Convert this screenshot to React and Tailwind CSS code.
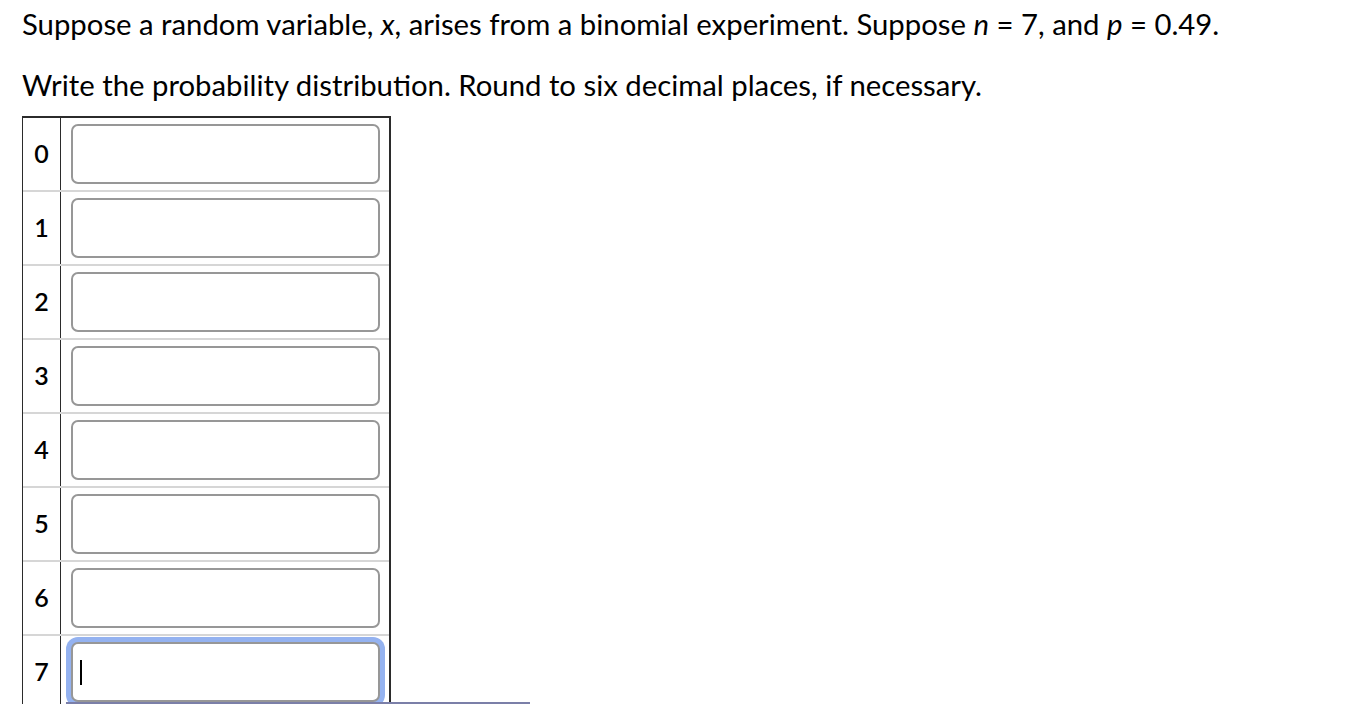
const values = [0, 1, 2, 3, 4, 5, 6, 7];

export default function App() {
  return (
    <div className="min-h-screen bg-white text-black pl-[22px] font-['Lato',sans-serif]">
      <p className="pt-[4px] text-[29.3px] leading-[40px]">
        Suppose a random variable, <i>x</i>, arises from a binomial experiment.
        Suppose <i>n</i> = 7, and <i>p</i> = 0.49.
      </p>
      <p className="mt-[21px] text-[29.3px] leading-[40px]">
        Write the probability distribution. Round to six decimal places, if
        necessary.
      </p>

      <div className="mt-[11px] w-[369px] border-t-2 border-l border-r-2 border-[#2b2b2b]">
        {values.map((v) => {
          const focused = v === 7;
          return (
            <div key={v} className="flex border-b-2 border-[#d6d6d6]">
              <div className="w-[38px] shrink-0 border-r border-[#2b2b2b] flex items-center justify-center text-[25px] font-semibold">
                {v}
              </div>
              <div className="flex-1 pl-[10px] pr-[9px] py-[6px]">
                <div
                  className={`h-[60px] rounded-[7px] border-2 border-[#979797] bg-white flex items-center pl-[7px] ${
                    focused ? "shadow-[0_0_0_5px_#94b2f0]" : ""
                  }`}
                >
                  {focused && <span className="block w-[2px] h-[25px] bg-black" />}
                </div>
              </div>
            </div>
          );
        })}
      </div>

      <div className="fixed bottom-0 left-[66px] w-[464px] h-[2px] bg-[#7b7fa8] z-10" />
    </div>
  );
}
